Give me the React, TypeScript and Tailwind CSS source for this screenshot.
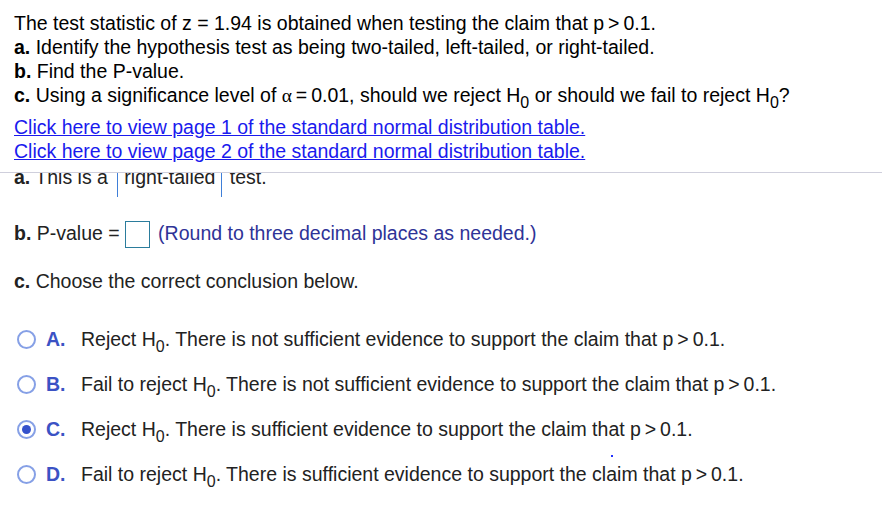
import React from 'react';

const Sub = ({ children }: { children: React.ReactNode }) => (
  <span className="relative top-[6px] text-[16px] leading-none">{children}</span>
);

const H0 = () => (
  <>
    H<Sub>0</Sub>
  </>
);

type Choice = {
  letter: string;
  lead: string;
  rest: string;
  picked?: boolean;
};

const choices: Choice[] = [
  { letter: 'A.', lead: 'Reject', rest: 'There is not sufficient evidence to support the claim that p\u2009>\u20090.1.' },
  { letter: 'B.', lead: 'Fail to reject', rest: 'There is not sufficient evidence to support the claim that p\u2009>\u20090.1.' },
  { letter: 'C.', lead: 'Reject', rest: 'There is sufficient evidence to support the claim that p\u2009>\u20090.1.', picked: true },
  { letter: 'D.', lead: 'Fail to reject', rest: 'There is sufficient evidence to support the claim that p\u2009>\u20090.1.' },
];

const Radio = ({ picked }: { picked?: boolean }) => (
  <span className="w-[19px] h-[19px] rounded-full border-2 border-[#86a0e6] bg-white flex items-center justify-center shrink-0">
    {picked && <span className="w-[9px] h-[9px] rounded-full bg-[#3552cc]" />}
  </span>
);

const App = () => {
  return (
    <div className="relative w-[882px] h-[516px] bg-white overflow-hidden font-['Liberation_Sans',Arial,sans-serif] text-[19.5px] text-black">
      {/* question */}
      <div className="px-[14px] pt-[11px] leading-[24px]">
        <p>The test statistic of z = 1.94 is obtained when testing the claim that p&thinsp;&gt;&thinsp;0.1.</p>
        <p>
          <b>a.</b> Identify the hypothesis test as being two-tailed, left-tailed, or right-tailed.
        </p>
        <p>
          <b>b.</b> Find the P-value.
        </p>
        <p>
          <b>c.</b> Using a significance level of{' '}
          <span className="font-['Liberation_Serif',serif]">α</span>&thinsp;=&thinsp;0.01, should we reject <H0 /> or should we fail to reject <H0 />?
        </p>
        <div className="mt-[7px] flex flex-col items-start">
          <a className="text-[#1a1aee] underline">Click here to view page 1 of the standard normal distribution table.</a>
          <a className="text-[#1a1aee] underline">Click here to view page 2 of the standard normal distribution table.</a>
        </div>
      </div>

      <div className="mt-[9px] border-t border-[#cfcfdc]" />

      {/* answer area, scrolled a little */}
      <div className="h-[24px] overflow-hidden text-[#222]">
        <div className="mt-[-11px] px-[14px] leading-[24px] whitespace-nowrap">
          <b>a.</b> This is a{' '}
          <span className="ml-[4px] mr-[2px] inline-block border border-[#3f7fd8] px-[6px] pt-[2px] pb-[11px] leading-[24px]">right-tailed</span>{' '}
          test.
        </div>
      </div>

      <div className="mt-[24px] px-[14px] flex items-center h-[26px] text-[#222] whitespace-nowrap">
        <span>
          <b>b.</b> P-value =&nbsp;
        </span>
        <span className="w-[25px] h-[27px] border border-[#2b7c9c]" />
        <span className="ml-[8px] text-[#2e3397]">(Round to three decimal places as needed.)</span>
      </div>

      <p className="mt-[22px] px-[14px] leading-[24px] text-[#222]">
        <b>c.</b> Choose the correct conclusion below.
      </p>

      <div className="mt-[24px] flex flex-col">
        {choices.map((c) => (
          <div key={c.letter} className="h-[45px] flex items-center pl-[17px] text-[#222] whitespace-nowrap">
            <Radio picked={c.picked} />
            <span className="ml-[10px] w-[35px] font-bold text-[#3b52c4]">{c.letter}</span>
            <span>
              {c.lead} <H0 />. {c.rest}
            </span>
          </div>
        ))}
      </div>

      <span className="absolute left-[611px] top-[455px] w-[2px] h-[2px] bg-[#2030ff]" />
    </div>
  );
};

export default App;
